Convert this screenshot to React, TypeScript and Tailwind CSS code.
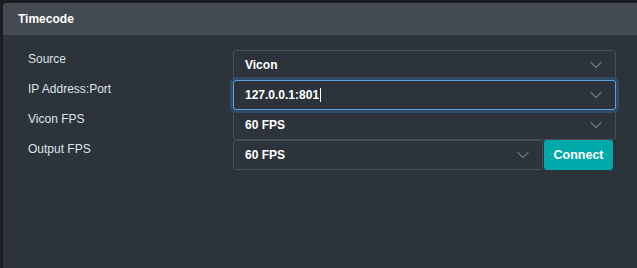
import { ChevronDown } from "lucide-react";

const font = { fontFamily: '"Liberation Sans", Arial, sans-serif' };

function Chevron() {
  return <ChevronDown className="size-[20px] shrink-0 text-[#6c7480]" strokeWidth={1.5} />;
}

function Select({ value, className = "" }: { value: string; className?: string }) {
  return (
    <div
      className={`flex h-[30px] items-center justify-between rounded-[3px] border border-[#474e57] bg-[#2c333b] pl-[11px] pr-[9px] ${className}`}
    >
      <span className="text-[12px] font-bold text-white">{value}</span>
      <Chevron />
    </div>
  );
}

export default function App() {
  return (
    <div className="h-[268px] w-[637px] overflow-hidden bg-[#1b1e21] pl-[3px] pt-[3px]" style={font}>
      <div className="h-full w-[640px] overflow-hidden rounded-tl-[4px] bg-[#2c333b]">
        <div className="flex h-[32px] items-center bg-[#434a52] pl-[15px] text-[12px] font-bold text-white">
          Timecode
        </div>
        <div className="grid grid-cols-[205px_383px] pl-[25px] pt-[15px]">
          <div className="flex flex-col">
            {["Source", "IP Address:Port", "Vicon FPS", "Output FPS"].map((l) => (
              <div key={l} className="h-[30px] pt-[1px] text-[12px] leading-4 text-[#dde2e7]">
                {l}
              </div>
            ))}
          </div>
          <div className="flex flex-col">
            <Select value="Vicon" />
            <div className="relative z-10 flex h-[30px] items-center justify-between rounded-[3px] border border-[#5e9fdc] bg-[#2c333b] pl-[11px] pr-[9px] shadow-[0_0_0_3px_#2f4b66]">
              <span className="flex items-center text-[12px] font-bold text-white">
                127.0.0.1:801
                <span className="ml-[1px] inline-block h-[14px] w-px bg-white" />
              </span>
              <Chevron />
            </div>
            <Select value="60 FPS" />
            <div className="flex gap-[1px]">
              <Select value="60 FPS" className="w-[310px]" />
              <button className="h-[30px] w-[69px] rounded-[3px] bg-[#00aaaa] text-[12.5px] font-bold text-white">
                Connect
              </button>
            </div>
          </div>
        </div>
      </div>
    </div>
  );
}
